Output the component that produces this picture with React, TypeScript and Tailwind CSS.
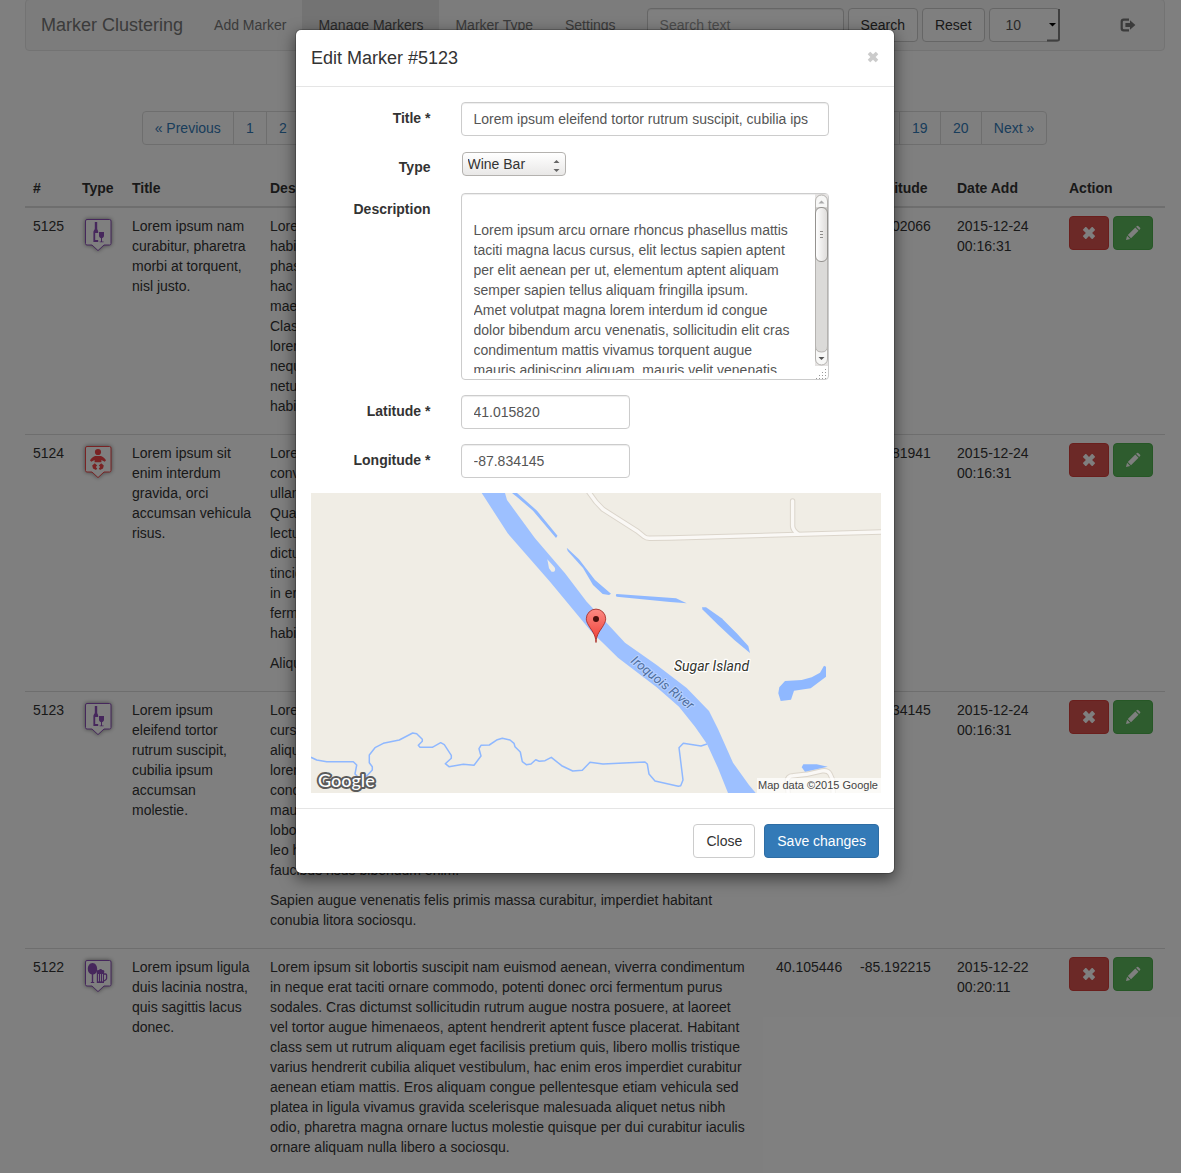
import React from 'react';

type MarkerKind = 'wine' | 'baby' | 'garden';

type Marker = {
    id: number;
    kind: MarkerKind;
    title: string;
    description: string[];
    lat: string;
    lng: string;
    date: string;
};

const NAV_LINKS = ['Add Marker', 'Manage Markers', 'Marker Type', 'Settings'];

const PAGES = Array.from({ length: 20 }, (_, i) => i + 1);

const MARKERS: Marker[] = [
    {
        id: 5125,
        kind: 'wine',
        title: 'Lorem ipsum nam curabitur, pharetra morbi at torquent, nisl justo.',
        description: [
            `Lorem ipsum nullam aenean vitae lacinia, platea sem ornare
            habitasse nunc vivamus etiam, tempus leo aliquet
            phasellus rutrum conubia dictum, massa porta ligula
            hac imperdiet sodales curae, litora felis donec
            maecenas suscipit orci lobortis, viverra quam erat.
            Class aptent sociosqu ad turpis, elementum non nibh
            lorem tristique pulvinar augue, cras dapibus metus
            neque blandit iaculis varius, fusce sagittis urna
            netus malesuada fermentum quis, posuere id velit
            habitant congue porttitor ante.`,
        ],
        lat: '40.377218',
        lng: '-86.302066',
        date: '2015-12-24 00:16:31',
    },
    {
        id: 5124,
        kind: 'baby',
        title: 'Lorem ipsum sit enim interdum gravida, orci accumsan vehicula risus.',
        description: [
            `Lorem ipsum cursus sapien mattis duis, egestas nec tortor
            convallis eros facilisis primis, sed luctus nulla
            ullamcorper vel pretium arcu, ut magna bibendum.
            Quam euismod potenti semper, lacus molestie justo
            lectus tellus commodo ac, pharetra mi volutpat
            dictumst odio auctor nostra, elit fringilla ipsum
            tincidunt per himenaeos risus, hendrerit mauris
            in eros inceptos feugiat, laoreet purus tempor
            fermentum venenatis at placerat, dui vestibulum
            habitasse consequat netus.`,
            'Aliquam torquent diam sollicitudin, quisque eget.',
        ],
        lat: '41.560273',
        lng: '-87.181941',
        date: '2015-12-24 00:16:31',
    },
    {
        id: 5123,
        kind: 'wine',
        title: 'Lorem ipsum eleifend tortor rutrum suscipit, cubilia ipsum accumsan molestie.',
        description: [
            `Lorem ipsum arcu ornare rhoncus phasellus mattis taciti magna lacus
            cursus, elit lectus sapien aptent per elit aenean per ut, elementum
            aliquam semper sapien tellus fringilla. Amet volutpat magna
            lorem interdum id congue dolor bibendum arcu venenatis, elit cras
            condimentum mattis vivamus torquent augue,
            mauris adipiscing aliquam, mauris velit venenatis
            lobortis nibh posuere pulvinar, integer eget quam
            leo hendrerit fusce porta sed nisi vulputate,
            faucibus risus bibendum enim.`,
            'Sapien augue venenatis felis primis massa curabitur, imperdiet habitant conubia litora sociosqu.',
        ],
        lat: '41.015820',
        lng: '-87.834145',
        date: '2015-12-24 00:16:31',
    },
    {
        id: 5122,
        kind: 'garden',
        title: 'Lorem ipsum ligula duis lacinia nostra, quis sagittis lacus donec.',
        description: [
            `Lorem ipsum sit lobortis suscipit nam euismod aenean, viverra condimentum
            in neque erat taciti ornare commodo, potenti donec orci fermentum purus
            sodales. Cras dictumst sollicitudin rutrum augue nostra posuere, at laoreet
            vel tortor augue himenaeos, aptent hendrerit aptent fusce placerat. Habitant
            class sem ut rutrum aliquam eget facilisis pretium quis, libero mollis tristique
            varius hendrerit cubilia aliquet vestibulum, hac enim eros imperdiet curabitur
            aenean etiam mattis. Eros aliquam congue pellentesque etiam vehicula sed
            platea in ligula vivamus gravida scelerisque malesuada aliquet netus nibh
            odio, pharetra magna ornare luctus molestie quisque per dui curabitur iaculis
            ornare aliquam nulla libero a sociosqu.`,
        ],
        lat: '40.105446',
        lng: '-85.192215',
        date: '2015-12-22 00:20:11',
    },
];

const DESCRIPTION = `
Lorem ipsum arcu ornare rhoncus phasellus mattis
taciti magna lacus cursus, elit lectus sapien aptent
per elit aenean per ut, elementum aptent aliquam
semper sapien tellus aliquam fringilla ipsum.
Amet volutpat magna lorem interdum id congue
dolor bibendum arcu venenatis, sollicitudin elit cras
condimentum mattis vivamus torquent augue
mauris adipiscing aliquam, mauris velit venenatis
lobortis nibh posuere pulvinar.`;

const controlClass =
    'block h-[34px] w-full rounded border border-[#ccc] bg-white pr-5 pl-3 text-sm text-[#555] shadow-[inset_0_1px_1px_rgba(0,0,0,0.075)] outline-none placeholder:text-[#999]';

const buttonClass = 'h-[34px] rounded border px-3 text-sm leading-5';

const MarkerIcon = ({ kind }: { kind: MarkerKind }) => {
    const color = kind === 'baby' ? '#f34648' : '#8c4eb8';
    return (
        <svg width="32" height="37" viewBox="0 0 32 37" className="block drop-shadow-[0_0_2px_rgba(0,0,0,0.5)]">
            <path
                d="M5 3.5H27.5Q29 3.5 29 5V27.5Q29 29 27.5 29H22L16 34.6L10 29H5Q3.5 29 3.5 27.5V5Q3.5 3.5 5 3.5Z"
                fill="#fff"
                stroke={color}
            />
            {kind === 'wine' && (
                <g fill={color}>
                    <path d="M12.8 6H15.2V12.4C15.2 13.8 16.2 14.4 16.2 16V17H13.2V24H16.2V26H11.4V16C11.4 14.4 12.8 13.8 12.8 12.4Z" />
                    <path d="M17 16H22V19.5C22 21 21.2 21.8 20 22.2V25.4H21.6V26.2H17.6V25.4H19V22.2C17.8 21.8 17 21 17 19.5Z" />
                </g>
            )}
            {kind === 'baby' && (
                <g fill={color}>
                    <circle cx="16" cy="9" r="3.1" />
                    <path d="M13 13H19C21 14 23 15.6 24 17.2L22.8 18.8L19.4 17V19.2H12.6V17L9.2 18.8L8 17.2C9 15.6 11 14 13 13Z" />
                    <path d="M12.8 20.2L15.2 22.6L13.8 24L15.2 25.4L14 27L11 25.4L10.2 22.4Z" />
                    <path d="M19.2 20.2L16.8 22.6L18.2 24L16.8 25.4L18 27L21 25.4L21.8 22.4Z" />
                </g>
            )}
            {kind === 'garden' && (
                <g fill={color}>
                    <path d="M10.5 6C13.5 6 15.2 9 15.2 12C15.2 15 13.8 17 11.2 17.6V25H12.2V26H8.8V25H9.8V17.6C7.2 17 5.8 14.8 5.8 12C5.8 9 7.6 6 10.5 6Z" />
                    <path d="M14.8 16C14 14 15.4 12.8 16.8 13.2C17.6 11.8 19.6 11.8 20.2 13C21.8 12.6 23 14 22 16V26H14.8Z" />
                    <path d="M16.5 17V24.4M18.5 17V24.4M20.5 17V24.4" stroke="#fff" strokeWidth="0.9" />
                    <path d="M22 17H23.6Q24.6 17 24.6 18V21.6Q24.6 22.8 22 24" fill="none" stroke={color} strokeWidth="1.3" />
                </g>
            )}
        </svg>
    );
};

const RemoveIcon = ({ className }: { className: string }) => (
    <svg viewBox="0 0 14 14" className={className}>
        <path d="M4.2 1.1L7 3.9L9.8 1.1Q10.2 .7 10.6 1.1L12.9 3.4Q13.3 3.8 12.9 4.2L10.1 7L12.9 9.8Q13.3 10.2 12.9 10.6L10.6 12.9Q10.2 13.3 9.8 12.9L7 10.1L4.2 12.9Q3.8 13.3 3.4 12.9L1.1 10.6Q.7 10.2 1.1 9.8L3.9 7L1.1 4.2Q.7 3.8 1.1 3.4L3.4 1.1Q3.8 .7 4.2 1.1Z" />
    </svg>
);

const PencilIcon = () => (
    <svg width="16" height="16" viewBox="0 0 16 16" className="mx-auto fill-white">
        <path d="M1 15L2.1 10.8L5.2 13.9Z" />
        <path d="M2.8 10L10.3 2.5L13.5 5.7L6 13.2Z" />
        <path d="M11.1 1.8L12 .9Q12.6 .4 13.2 .9L15.1 2.8Q15.6 3.4 15.1 4L14.2 4.9Z" />
    </svg>
);

const LogoutIcon = () => (
    <svg width="16" height="14" viewBox="0 0 16 14" className="fill-[#777]">
        <path d="M9 .6V2.8H4Q2.8 2.8 2.8 4V10Q2.8 11.2 4 11.2H9V13.4H3.6Q.6 13.4 .6 10.4V3.6Q.6 .6 3.6 .6Z" />
        <path d="M10 2.2L15.4 7L10 11.8V9H5.4V5H10Z" />
    </svg>
);

const Navbar = () => (
    <nav className="-mt-px flex h-[52px] items-center rounded border border-[#e7e7e7] bg-[#f8f8f8] text-[#777]">
        <a href="#" className="px-[15px] text-lg leading-5">Marker Clustering</a>
        <ul className="flex h-full">
            {NAV_LINKS.map((link) => (
                <li key={link} className={link === 'Manage Markers' ? 'bg-[#e7e7e7] text-[#555]' : ''}>
                    <a href="#" className="block px-4 py-[15px] leading-5">{link}</a>
                </li>
            ))}
        </ul>
        <form className="ml-[15px] flex gap-1">
            <div className="w-[197px]">
                <input type="text" aria-label="Search text" placeholder="Search text" className={controlClass} />
            </div>
            <button type="button" className={`${buttonClass} border-[#ccc] bg-white text-[#333]`}>Search</button>
            <button type="button" className={`${buttonClass} border-[#ccc] bg-white text-[#333]`}>Reset</button>
            <div className="relative">
                <select
                    aria-label="Rows per page"
                    className="h-[34px] w-[71px] appearance-none rounded border border-[#ccc] bg-white px-4 text-sm text-[#555]"
                >
                    <option>10</option>
                </select>
                <svg width="13" height="34" viewBox="0 0 13 34" className="pointer-events-none absolute top-0 right-0">
                    <path d="M0 32.5H10.5Q12 32.5 12 31V1" fill="none" stroke="#808080" strokeWidth="2" />
                    <path d="M2 15H9L5.5 18.5Z" fill="#000" />
                </svg>
            </div>
        </form>
        <a href="#" aria-label="Log out" className="ml-auto pr-7">
            <LogoutIcon />
        </a>
    </nav>
);

const Pagination = () => {
    const linkClass = '-ml-px block border border-[#ddd] bg-white px-3 py-1.5 leading-5';
    return (
        <ul className="mt-[60px] flex justify-center text-[#337ab7]">
            <li><a href="#" className={`${linkClass} rounded-l`}>« Previous</a></li>
            {PAGES.map((page) => (
                <li key={page}>
                    <a href="#" className={`${linkClass} text-center ${page > 9 ? 'w-[42px]' : 'w-[34px]'}`}>{page}</a>
                </li>
            ))}
            <li><a href="#" className={`${linkClass} rounded-r`}>Next »</a></li>
        </ul>
    );
};

const MarkerTable = () => (
    <table className="mt-[25px] w-full table-fixed border-separate border-spacing-0 text-left">
        <colgroup>
            <col className="w-[49px]" />
            <col className="w-[50px]" />
            <col className="w-[138px]" />
            <col />
            <col className="w-[84px]" />
            <col className="w-[97px]" />
            <col className="w-[112px]" />
            <col className="w-[104px]" />
        </colgroup>
        <thead>
            <tr className="[&>th]:border-b-2 [&>th]:border-[#ddd] [&>th]:p-2">
                <th>#</th>
                <th>Type</th>
                <th>Title</th>
                <th>Description</th>
                <th>Latitude</th>
                <th>Longitude</th>
                <th>Date Add</th>
                <th>Action</th>
            </tr>
        </thead>
        <tbody>
            {MARKERS.map((marker) => (
                <tr
                    key={marker.id}
                    className="align-top [&>td]:border-t [&>td]:border-[#ddd] [&>td]:p-2 first:[&>td]:border-t-0"
                >
                    <td>{marker.id}</td>
                    <td><MarkerIcon kind={marker.kind} /></td>
                    <td>{marker.title}</td>
                    <td>
                        {marker.description.map((text) => (
                            <p key={text} className="mb-2.5 whitespace-pre-line">{text}</p>
                        ))}
                    </td>
                    <td>{marker.lat}</td>
                    <td>{marker.lng}</td>
                    <td>{marker.date}</td>
                    <td>
                        <div className="flex gap-1">
                            <button
                                type="button"
                                aria-label={`Delete marker ${marker.id}`}
                                className="h-[34px] w-10 rounded border border-[#d43f3a] bg-[#d9534f]"
                            >
                                <RemoveIcon className="mx-auto size-3.5 fill-white" />
                            </button>
                            <button
                                type="button"
                                aria-label={`Edit marker ${marker.id}`}
                                className="h-[34px] w-10 rounded border border-[#4cae4c] bg-[#5cb85c]"
                            >
                                <PencilIcon />
                            </button>
                        </div>
                    </td>
                </tr>
            ))}
        </tbody>
    </table>
);

const RiverMap = () => (
    <svg viewBox="0 0 570 300" className="block w-full">
        <defs>
            <linearGradient id="pin" x1="0" y1="0" x2="0" y2="1">
                <stop offset="0" stopColor="#fb8a83" />
                <stop offset="1" stopColor="#f03c33" />
            </linearGradient>
        </defs>
        <rect width="570" height="300" fill="#f0ede5" />

        {/* Roads: casing first, then the white surface */}
        {[
            { stroke: '#dbd5cb', strokeWidth: 5.4 },
            { stroke: '#faf8f5', strokeWidth: 3.4 },
        ].map((style) => (
            <g key={style.stroke} fill="none" strokeLinejoin="round" strokeLinecap="round" {...style}>
                <path d="M277 -2L285 9L292 16.3L325.7 37.7L333 43.5Q335.5 45.5 339 45.3L359 45L485.7 41.4L572 39" />
                <path d="M481.6 8V33Q481.6 37 487 41" />
                <path d="M477.3 302L476.3 288Q476.5 283 482 282.7L495.7 281.3L511 277.9Q517 277 519 281L521.7 287L522.3 302" />
            </g>
        ))}

        <g fill="#8fb8ff">
            <path
                fill="#9dc0ff"
                fillRule="evenodd"
                d="M170.7 0L196.7 40.3L239 88.7L281.7 140.3L292 150L307 164.7L345.7 194.3L368 213.7L384 233.7L396 251L407 275L417 300H444.7L438 292L422 269.7L407 236L398 218L375.7 195L345.7 172L314 149.7L295.7 130L275.7 108.7L254 80.3L224 45.3L196 7L194 0ZM236.3 66.3L243.5 74.3Q245 77 243 78.7H240.6L238 75.3Z"
            />
            <path d="M201 0H206L226 17.7L246.5 42.7L245 45L222 17.7L205.7 3.7Z" />
            <path d="M255.7 54.7L268 66.3L284 87L300 100.7L298 102L291.7 101L282 92L272 75L256.7 58Z" />
            <path d="M305.7 101L365 105.3L375.7 110.3L359 109L305.7 103.7Q304 102 305.7 101Z" />
            <path d="M391 114.3H395L410.7 125.3L425.7 140.3L437.3 153L439 160L423.3 147L407.3 132L391.5 116.5Z" />
            <path d="M474 188L490.7 187L500.7 184.3L509 179.7L513 172.7L515 173.7V183.7L499.7 195.3L483 197.7L480 206.7L469.7 208L467.3 200.3L468.3 194.3Z" />
            <path d="M492.3 271.3H505.7L516.7 273.7L494 278.7L490.7 274.3Z" />
        </g>
        <path
            d="M0 264.3L5.7 267L15.7 268.7H42.3L45.7 272L44 281L47.3 284.3L55.7 283L61.3 277V273.7L58.3 269.7V262L64 254.7L72.3 250.3L88.3 247L101.7 240L105.7 240.7L111.3 246.3V248.3L107.3 252.3L109 254.3H121.3L129.7 249.7L133.3 251.7L140.3 262.3V265.3L134.3 270.7L138 273.7L152.3 271.3L163 272.3L170 263L168 255.7L170 252.3L178.3 252L186.3 246.7L191.3 245.3L199 247L203 250.3L204 253.7L209.3 259L211.3 268.7L215.3 271.7L220 271L224.7 266.7L228.3 268.3L234 267.7L240.3 264.3L250.7 272.7L261.7 278L271.3 277.3L279 269.3L292 271L334 269L336.3 271L338 281L344 288L367.3 293.3L369.7 292.7L372 287L368 254.7L372.3 250.3L390 253L396 251"
            fill="none"
            stroke="#8fb8ff"
            strokeWidth="1.5"
            strokeLinejoin="round"
        />

        <g fontFamily="Roboto, sans-serif" fontStyle="italic" strokeLinejoin="round" paintOrder="stroke">
            <text x="363" y="178" fontSize="14" fill="#33342c" stroke="#fff" strokeWidth="2.5">Sugar Island</text>
            <text transform="translate(319 169) rotate(39)" fontSize="13" fill="#4f6f9e" stroke="#b9d2ff" strokeWidth="2">
                Iroquois River
            </text>
        </g>

        <path
            d="M285 149.5C284.6 141 280.5 137.5 277.6 132.4C276 129.6 275.3 127.8 275.3 125.8A9.7 9.7 0 0 1 294.7 125.8C294.7 127.8 294 129.6 292.4 132.4C289.5 137.5 285.4 141 285 149.5Z"
            fill="url(#pin)"
            stroke="#a8312b"
            strokeWidth="0.9"
        />
        <circle cx="285" cy="126" r="3" fill="#4a100c" />

        <text
            x="7"
            y="294"
            fontFamily="Lato, sans-serif"
            fontSize="18"
            fontWeight="500"
            fill="#fff"
            stroke="#5b5b5b"
            strokeWidth="4"
            strokeLinejoin="round"
            paintOrder="stroke"
        >
            Google
        </text>
        <rect x="446" y="285" width="124" height="15" fill="#fff" fillOpacity="0.7" />
        <text x="567" y="296" textAnchor="end" fontFamily="Liberation Sans, sans-serif" fontSize="11" fill="#444">
            Map data ©2015 Google
        </text>
    </svg>
);

const ScrollTrack = () => (
    <svg width="14" height="186" viewBox="0 0 14 186" className="pointer-events-none absolute top-0 right-0">
        <defs>
            <linearGradient id="thumb">
                <stop offset="0" stopColor="#fff" />
                <stop offset="1" stopColor="#dddbd9" />
            </linearGradient>
        </defs>
        <rect x="1" width="13" height="172" fill="#e4e2e1" />
        <rect x="1.5" y="1" width="12" height="170" rx="6" fill="#f7f7f6" stroke="#b5b3b0" />
        <path d="M1.5 14H13.5V152Q13.5 158 7.5 158T1.5 152Z" fill="#dbdad8" stroke="#b5b3b0" />
        <rect x="1.5" y="13.5" width="12" height="54" rx="5.5" fill="url(#thumb)" stroke="#94928f" />
        <path d="M6 37.5H9M6 40.5H9M6 43.5H9" stroke="#8e8c8a" />
        <path d="M4.5 9.5H10.5L7.5 6.5Z" fill="#aaa" />
        <path d="M4.5 163H10.5L7.5 166Z" fill="#555" />
        <path
            d="M11 175.5H12M8 178.5H9M11 178.5H12M5 181.5H6M8 181.5H9M11 181.5H12M2 184.5H3M5 184.5H6M8 184.5H9M11 184.5H12"
            stroke="#999"
        />
    </svg>
);

const FormRow = ({ id, label, wide, children }: { id: string; label: string; wide?: boolean; children: React.ReactNode }) => (
    <div className="-mx-[15px] mb-[15px] flex items-start">
        <label htmlFor={id} className="w-1/4 pt-1.5 pr-[15px] text-right font-bold">{label}</label>
        <div className={`px-[15px] ${wide ? 'w-8/12' : 'w-4/12'}`}>{children}</div>
    </div>
);

const EditModal = () => (
    <div
        role="dialog"
        aria-labelledby="modal-title"
        className="w-[600px] max-w-full rounded-md border border-black/20 bg-white bg-clip-padding shadow-[0_5px_15px_rgba(0,0,0,0.5)]"
    >
        <div className="flex items-start justify-between border-b border-[#e5e5e5] p-[15px]">
            <h4 id="modal-title" className="text-lg leading-[26px]">Edit Marker #5123</h4>
            <button type="button" aria-label="Close dialog" className="py-1.5 opacity-20">
                <RemoveIcon className="size-3 fill-black" />
            </button>
        </div>

        <div className="p-[15px]">
            <form>
                <FormRow id="title" label="Title *" wide>
                    <input id="title" type="text" defaultValue={MARKERS[2].title} className={controlClass} />
                </FormRow>
                <FormRow id="type" label="Type" wide>
                    <div className="relative mt-px ml-px h-[26px] w-[104px]">
                        <select
                            id="type"
                            className="h-6 w-full appearance-none rounded border border-[#b4b2af] bg-linear-to-b from-white to-[#e9e8e7] px-[5px] text-sm text-[#333]"
                        >
                            <option>Wine Bar</option>
                        </select>
                        <svg width="7" height="14" viewBox="0 0 7 14" className="pointer-events-none absolute top-[7px] right-1.5 fill-[#666]">
                            <path d="M.5 4H6.5L3.5 1Z" />
                            <path d="M.5 10H6.5L3.5 13Z" />
                        </svg>
                    </div>
                </FormRow>
                <FormRow id="description" label="Description" wide>
                    <div className="relative rounded border border-[#ccc] py-1.5 pr-6 pl-3 shadow-[inset_0_1px_1px_rgba(0,0,0,0.075)]">
                        <textarea
                            id="description"
                            defaultValue={DESCRIPTION}
                            className="block h-[173px] w-full resize-none overflow-y-auto text-sm leading-5 text-[#555] outline-none [scrollbar-width:none]"
                        />
                        <ScrollTrack />
                    </div>
                </FormRow>
                <FormRow id="latitude" label="Latitude *">
                    <input id="latitude" type="text" defaultValue="41.015820" className={controlClass} />
                </FormRow>
                <FormRow id="longitude" label="Longitude *">
                    <input id="longitude" type="text" defaultValue="-87.834145" className={controlClass} />
                </FormRow>
            </form>
            <div className="-mr-0.5">
                <RiverMap />
            </div>
        </div>

        <div className="flex justify-end gap-[9px] border-t border-[#e5e5e5] p-[15px]">
            <button type="button" className={`${buttonClass} border-[#ccc] bg-white text-[#333]`}>Close</button>
            <button type="button" className={`${buttonClass} border-[#2e6da4] bg-[#337ab7] text-white`}>Save changes</button>
        </div>
    </div>
);

const App = () => {
    return (
        <div className="relative h-screen overflow-hidden bg-white font-['Liberation_Sans',Arial,sans-serif] text-sm leading-5 text-[#333]">
            <div className="pr-4 pl-[25px]">
                <Navbar />
                <Pagination />
                <MarkerTable />
            </div>

            {/* Backdrop with the open dialog */}
            <div className="absolute inset-0 flex items-start justify-center bg-black/50 pt-[29px] pl-[9px]">
                <EditModal />
            </div>
        </div>
    );
};

export default App;
